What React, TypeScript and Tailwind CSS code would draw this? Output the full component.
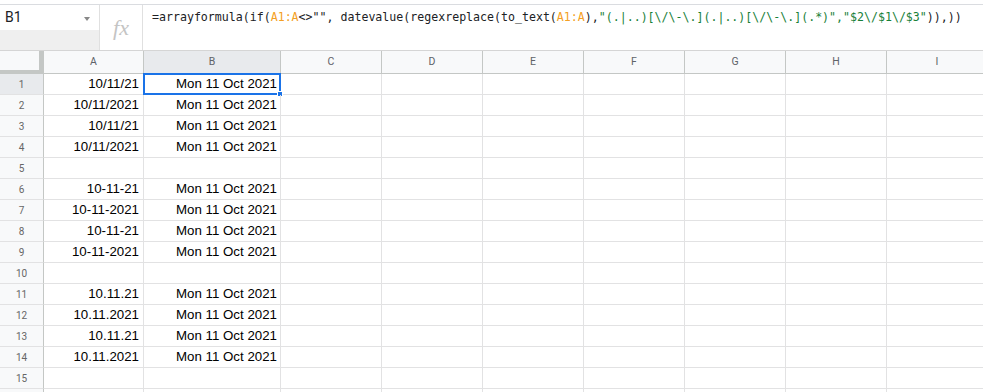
import React from 'react';

const colA = [
  '10/11/21', '10/11/2021', '10/11/21', '10/11/2021', '',
  '10-11-21', '10-11-2021', '10-11-21', '10-11-2021', '',
  '10.11.21', '10.11.2021', '10.11.21', '10.11.2021', '', '',
];

const otherCols = ['C', 'D', 'E', 'F', 'G', 'H', 'I'];

const App: React.FC = () => {
  return (
    <div className="h-[392px] w-[983px] overflow-hidden bg-white font-['Roboto',sans-serif]">
      {/* Formula bar */}
      <div className="h-[5px] border-b border-[#dadce0]" />
      <div className="flex h-[45px]">
        <div className="flex w-[100px] flex-col border-r border-[#e0e0e0]">
          <div className="flex h-[25px] items-center justify-between pl-[5px] pr-[9px]">
            <span className="text-[14px] text-[#202124]">B1</span>
            <span className="mt-[2px] h-0 w-0 border-x-[3px] border-t-[4px] border-x-transparent border-t-[#888]" />
          </div>
          <div className="flex-1 bg-[#efefef]" />
        </div>
        <div className="flex w-[43px] items-center justify-center border-r border-[#e0e0e0] pb-[1px]">
          <span className="font-['Liberation_Serif',serif] text-[22px] italic text-[#c4c4c4]">fx</span>
        </div>
        <div className="flex-1 whitespace-nowrap pl-[9px] pt-[4px] font-['DejaVu_Sans_Mono',monospace] text-[11.6px] leading-[16px] text-[#202124]">
          =arrayformula(if(<span className="text-[#f4a023]">A1:A</span>&lt;&gt;"", datevalue(regexreplace(to_text(<span className="text-[#f4a023]">A1:A</span>),<span className="text-[#188038]">"(.|..)[\/\-\.](.|..)[\/\-\.](.*)","$2\/$1\/$3"</span>)),))
        </div>
      </div>

      {/* Column headers */}
      <div className="flex h-[24px] border-t border-[#d5d5d5] bg-[#f8f9fa] text-[10.5px] text-[#5f6368]">
        <div className="w-[44px] shrink-0 border-b-[4px] border-r-[5px] border-[#c4c7c5]" />
        <div className="flex w-[100px] shrink-0 items-center justify-center border-b border-r border-[#c4c7c5]">A</div>
        <div className="flex w-[137px] shrink-0 items-center justify-center border-b border-r border-[#c4c7c5] bg-[#e8eaed]">B</div>
        {otherCols.map(c => (
          <div key={c} className="flex w-[101px] shrink-0 items-center justify-center border-b border-r border-[#c4c7c5]">{c}</div>
        ))}
      </div>

      {/* Rows */}
      {colA.map((a, i) => (
        <div key={i} className="flex h-[21px] font-['Liberation_Sans',Arial,sans-serif] text-[13.3px] text-black">
          <div className={`flex w-[44px] shrink-0 items-center justify-center border-b border-r border-b-[#e2e2e3] border-r-[#c4c7c5] font-['Roboto',sans-serif] text-[10px] text-[#666] ${i === 0 ? 'bg-[#e8eaed]' : 'bg-[#f8f9fa]'}`}>
            {i < 15 ? i + 1 : ''}
          </div>
          <div className="flex w-[100px] shrink-0 items-center justify-end border-b border-r border-[#e2e2e3] pr-[4px]">{a}</div>
          <div className="relative flex w-[137px] shrink-0 items-center justify-end border-b border-r border-[#e2e2e3] pr-[3px]">
            {a ? 'Mon 11 Oct 2021' : ''}
            {i === 0 && (
              <>
                <div className="absolute left-[-1px] top-[-1px] h-[22px] w-[138px] border-2 border-[#1a73e8]" />
                <div className="absolute bottom-[-3px] right-[-3px] h-[6px] w-[6px] border border-white bg-[#1a73e8]" />
              </>
            )}
          </div>
          {otherCols.map(c => (
            <div key={c} className="w-[101px] shrink-0 border-b border-r border-[#e2e2e3]" />
          ))}
        </div>
      ))}
    </div>
  );
};

export default App;
